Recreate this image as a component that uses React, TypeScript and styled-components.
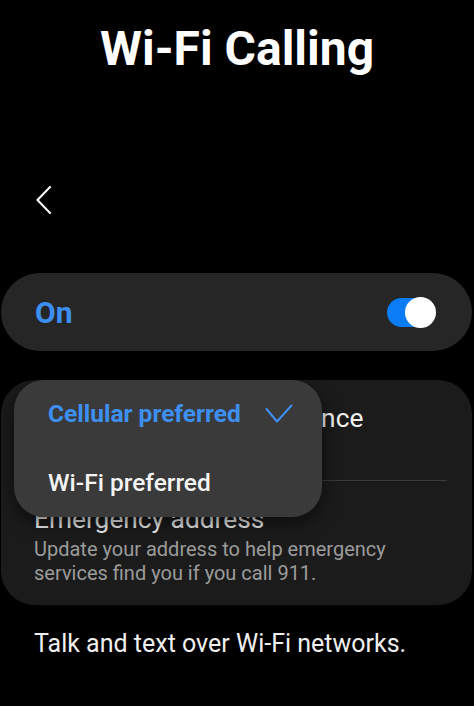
import React from "react";
import styled, { createGlobalStyle } from "styled-components";

const GlobalStyle = createGlobalStyle`
  html, body {
    margin: 0;
    padding: 0;
    background: #000000;
  }
  body {
    font-family: Roboto, "Liberation Sans", sans-serif;
    color: #f0f0f0;
  }
  * {
    box-sizing: border-box;
  }
`;

const Screen = styled.div`
  width: 474px;
  height: 706px;
  background: #000000;
  overflow: hidden;
`;

const Title = styled.h1`
  margin: 0;
  padding-top: 20px;
  font-size: 48px;
  line-height: 58px;
  font-weight: 700;
  text-align: center;
  color: #ffffff;
`;

const NavBar = styled.div`
  display: flex;
  align-items: center;
  padding: 108px 0 0 36px;
`;

const BackButton = styled.button`
  display: flex;
  padding: 0;
  border: none;
  background: none;
  cursor: pointer;
`;

const SwitchCard = styled.div`
  display: flex;
  align-items: center;
  justify-content: space-between;
  height: 78px;
  margin: 59px 2px 0 1px;
  padding: 0 37px 0 34px;
  border-radius: 39px;
  background: #262626;
`;

const SwitchLabel = styled.span`
  font-size: 30px;
  font-weight: 700;
  color: #3e8ff2;
`;

const Toggle = styled.div<{ $on: boolean }>`
  position: relative;
  width: 48px;
  height: 29px;
  border-radius: 15px;
  background: ${(p) => (p.$on ? "#0b7cf3" : "#5a5a5a")};
`;

const Knob = styled.span<{ $on: boolean }>`
  position: absolute;
  top: -1px;
  ${(p) => (p.$on ? "right: -1px;" : "left: -1px;")}
  width: 31px;
  height: 31px;
  border-radius: 50%;
  background: #ffffff;
`;

const SettingsCard = styled.div`
  position: relative;
  margin: 29px 2px 0 1px;
  border-radius: 34px;
  background: #1b1b1b;
`;

const Row = styled.div`
  padding: 22px 34px 20px 33px;
`;

const RowTitle = styled.div`
  font-size: 26.3px;
  line-height: 32px;
  color: #f0f0f0;
  white-space: nowrap;
`;

const RowSub = styled.div<{ $accent?: boolean }>`
  margin-top: 2px;
  font-size: 20px;
  line-height: 24px;
  color: ${(p) => (p.$accent ? "#3e8ff2" : "#9b9b9b")};
`;

const Divider = styled.div`
  height: 1px;
  margin: 0 25px 0 33px;
  background: #3a3a3a;
`;

const Footer = styled.p`
  margin: 24px 0 0 34px;
  font-size: 25px;
  line-height: 30px;
  color: #f0f0f0;
`;

const Popup = styled.div`
  position: absolute;
  top: 0;
  left: 13px;
  width: 308px;
  border-radius: 30px;
  background: #3a3a3a;
  box-shadow: 0 6px 18px rgba(0, 0, 0, 0.55);
  overflow: hidden;
`;

const Option = styled.div<{ $selected?: boolean }>`
  display: flex;
  align-items: center;
  justify-content: space-between;
  height: 68.5px;
  padding: 0 29px 0 34px;
  font-size: 24.5px;
  line-height: 30px;
  font-weight: ${(p) => (p.$selected ? 700 : 500)};
  color: ${(p) => (p.$selected ? "#3e8ff2" : "#f4f4f4")};
`;

const options = ["Cellular preferred", "Wi-Fi preferred"];

export default function App() {
  const selected = options[0];

  return (
    <Screen>
      <GlobalStyle />
      <Title>Wi-Fi Calling</Title>
      <NavBar>
        <BackButton aria-label="Back">
          <svg width="16" height="28" viewBox="0 0 16 28" fill="none">
            <polyline
              points="14,1 1.5,14 14,27"
              stroke="#ffffff"
              strokeWidth="2"
              strokeLinecap="round"
              strokeLinejoin="round"
            />
          </svg>
        </BackButton>
      </NavBar>

      <SwitchCard>
        <SwitchLabel>On</SwitchLabel>
        <Toggle $on>
          <Knob $on />
        </Toggle>
      </SwitchCard>

      <SettingsCard>
        <Row>
          <RowTitle>Wi-Fi Connection preference</RowTitle>
          <RowSub $accent>{selected}</RowSub>
        </Row>
        <Divider />
        <Row>
          <RowTitle>Emergency address</RowTitle>
          <RowSub>
            Update your address to help emergency
            <br />
            services find you if you call 911.
          </RowSub>
        </Row>

        <Popup>
          {options.map((opt) => (
            <Option key={opt} $selected={opt === selected}>
              <span>{opt}</span>
              {opt === selected && (
                <svg width="28" height="20" viewBox="0 0 28 20" fill="none">
                  <polyline
                    points="1.5,5 12,17.5 26.5,1.5"
                    stroke="#3e8ff2"
                    strokeWidth="2"
                    strokeLinecap="round"
                    strokeLinejoin="round"
                  />
                </svg>
              )}
            </Option>
          ))}
        </Popup>
      </SettingsCard>

      <Footer>Talk and text over Wi-Fi networks.</Footer>
    </Screen>
  );
}
